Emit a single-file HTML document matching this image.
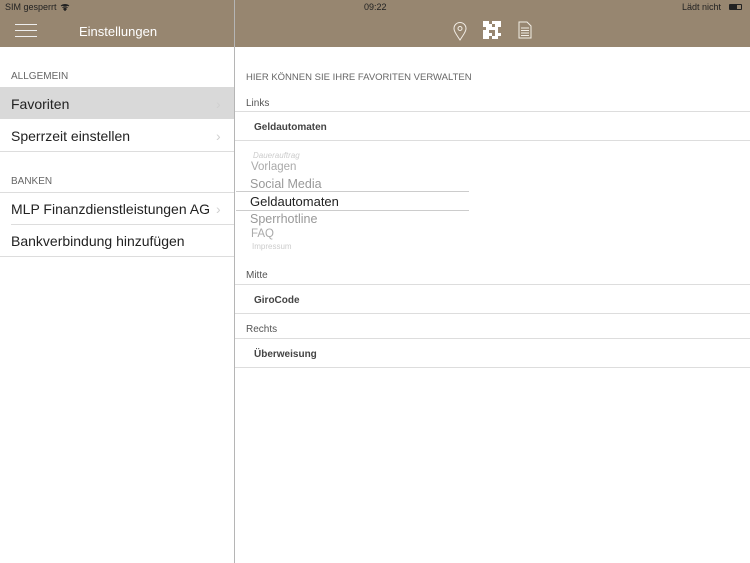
<!DOCTYPE html>
<html><head><meta charset="utf-8"><style>
*{margin:0;padding:0;box-sizing:border-box}
body{width:750px;height:563px;overflow:hidden;background:#fff;font-family:"Liberation Sans",sans-serif;position:relative;color:#222}
.hdr{position:absolute;left:0;top:0;width:750px;height:47px;background:#978670}
.vsep{position:absolute;left:234px;top:0;width:1px;height:563px;background:#b5b5b5}
.t{position:absolute;white-space:nowrap}
.line{position:absolute;height:1px;background:#ddd}
.chev{position:absolute;color:#d0d0d0;font-size:14px}
</style></head><body>
<div class="hdr"></div>
<div class="t" style="left:5px;top:2px;font-size:9px;color:#222">SIM gesperrt</div>
<svg style="position:absolute;left:60px;top:3px" width="10" height="8" viewBox="0 0 10 8"><path d="M1 3a6 6 0 0 1 8 0M2.5 4.6a4 4 0 0 1 5 0M5 7.5l1.3-1.5a2 2 0 0 0-2.6 0z" stroke="#222" fill="#222" stroke-width="1"/></svg>
<div class="t" style="left:364px;top:2px;font-size:9px;color:#222">09:22</div>
<div class="t" style="left:682px;top:2px;font-size:9px;color:#222">Lädt nicht</div>
<div style="position:absolute;left:729px;top:4px;width:13px;height:6px;border:1px solid #222;border-radius:1px"><div style="width:7px;height:4px;background:#222"></div></div>
<div style="position:absolute;left:15px;top:24px;width:22px;height:1px;background:#eee"></div>
<div style="position:absolute;left:15px;top:30px;width:22px;height:1px;background:#eee"></div>
<div style="position:absolute;left:15px;top:36px;width:22px;height:1px;background:#eee"></div>
<div class="t" style="left:79px;top:24px;font-size:13px;color:#fff">Einstellungen</div>
<svg style="position:absolute;left:453px;top:22px" width="14" height="19" viewBox="0 0 14 19"><path d="M7 18C3 12 1 9 1 6.5a6 6 0 0 1 12 0C13 9 11 12 7 18z" fill="none" stroke="#f2ede5" stroke-width="1"/><circle cx="7" cy="6.5" r="2" fill="none" stroke="#f2ede5"/></svg>
<svg style="position:absolute;left:483px;top:21px" width="18" height="18" viewBox="0 0 6 6"><g fill="#fff"><rect x="0" y="0" width="2" height="2"/><rect x="3" y="0" width="1" height="1"/><rect x="4" y="0" width="2" height="2"/><rect x="2" y="1" width="1" height="2"/><rect x="0" y="3" width="1" height="1"/><rect x="1" y="2" width="1" height="2"/><rect x="3" y="2" width="2" height="1"/><rect x="4" y="3" width="1" height="2"/><rect x="0" y="4" width="2" height="2"/><rect x="2" y="4" width="1" height="1"/><rect x="3" y="5" width="2" height="1"/><rect x="5" y="4" width="1" height="1"/></g></svg>
<svg style="position:absolute;left:518px;top:21px" width="14" height="18" viewBox="0 0 14 18"><path d="M1 1h8l4 4v12H1z" fill="none" stroke="#f2ede5"/><path d="M3 7h8M3 9.5h8M3 12h8M3 14.5h8" stroke="#f2ede5"/></svg>
<div class="vsep"></div>

<div class="t" style="left:11px;top:71px;font-size:10px;color:#666">ALLGEMEIN</div>
<div style="position:absolute;left:0;top:87px;width:234px;height:32px;background:#d9d9d9"></div>
<div class="t" style="left:11px;top:96px;font-size:14px">Favoriten</div>
<div class="chev" style="left:216px;top:96px">&#x203A;</div>
<div class="t" style="left:11px;top:128px;font-size:14px">Sperrzeit einstellen</div>
<div class="chev" style="left:216px;top:128px">&#x203A;</div>
<div class="line" style="left:0;top:151px;width:234px"></div>
<div class="t" style="left:11px;top:176px;font-size:10px;color:#666">BANKEN</div>
<div class="line" style="left:0;top:192px;width:234px"></div>
<div class="t" style="left:11px;top:201px;font-size:14px">MLP Finanzdienstleistungen AG</div>
<div class="chev" style="left:216px;top:201px">&#x203A;</div>
<div class="line" style="left:11px;top:224px;width:223px"></div>
<div class="t" style="left:11px;top:233px;font-size:14px">Bankverbindung hinzufügen</div>
<div class="line" style="left:0;top:256px;width:234px"></div>

<div class="t" style="left:246px;top:72px;font-size:9.5px;color:#666">HIER KÖNNEN SIE IHRE FAVORITEN VERWALTEN</div>
<div class="t" style="left:246px;top:98px;font-size:10px;color:#555">Links</div>
<div class="line" style="left:235px;top:111px;width:515px"></div>
<div class="t" style="left:254px;top:122px;font-size:10px;font-weight:bold;color:#444">Geldautomaten</div>
<div class="line" style="left:235px;top:140px;width:515px"></div>
<div class="t" style="left:253px;top:151px;font-size:8px;color:#ccc;font-style:italic">Dauerauftrag</div>
<div class="t" style="left:251px;top:161px;font-size:11.5px;color:#aaa">Vorlagen</div>
<div class="t" style="left:250px;top:177px;font-size:12.5px;color:#999">Social Media</div>
<div class="line" style="left:236px;top:191px;width:233px;background:#ccc"></div>
<div class="t" style="left:250px;top:194px;font-size:13px;color:#222">Geldautomaten</div>
<div class="line" style="left:236px;top:210px;width:233px;background:#ccc"></div>
<div class="t" style="left:250px;top:212px;font-size:12.5px;color:#999">Sperrhotline</div>
<div class="t" style="left:251px;top:228px;font-size:11.5px;color:#aaa">FAQ</div>
<div class="t" style="left:252px;top:242px;font-size:8px;color:#ccc">Impressum</div>
<div class="t" style="left:246px;top:270px;font-size:10px;color:#555">Mitte</div>
<div class="line" style="left:235px;top:284px;width:515px"></div>
<div class="t" style="left:254px;top:295px;font-size:10px;font-weight:bold;color:#444">GiroCode</div>
<div class="line" style="left:235px;top:313px;width:515px"></div>
<div class="t" style="left:246px;top:324px;font-size:10px;color:#555">Rechts</div>
<div class="line" style="left:235px;top:338px;width:515px"></div>
<div class="t" style="left:254px;top:349px;font-size:10px;font-weight:bold;color:#444">Überweisung</div>
<div class="line" style="left:235px;top:367px;width:515px"></div>
</body></html>
